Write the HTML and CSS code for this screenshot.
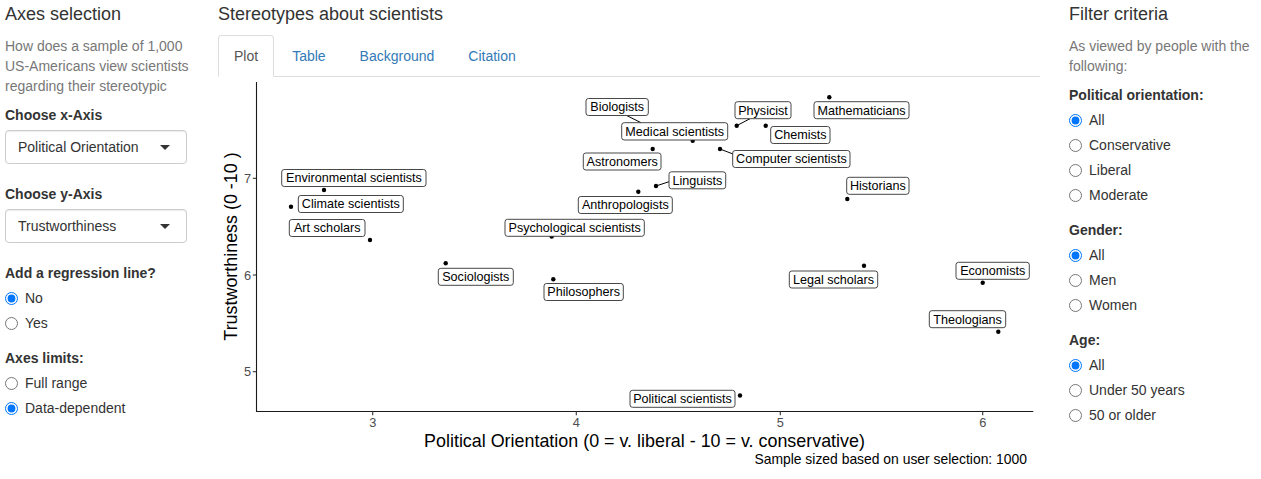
FILE: index.html
```html
<!DOCTYPE html>
<html>
<head>
<meta charset="utf-8">
<title>Stereotypes about scientists</title>
<link rel="stylesheet" href="styles.css">
</head>
<body>
<div class="page">
  <aside class="col left">
    <h3 class="title">Axes selection</h3>
    <p class="muted">How does a sample of 1,000 US-Americans view scientists regarding their stereotypic</p>
    <div class="sel-group">
      <label class="ctl-label sel-label">Choose x-Axis</label>
      <div class="select"><span>Political Orientation</span><span class="caret"></span></div>
    </div>
    <div class="sel-group">
      <label class="ctl-label sel-label">Choose y-Axis</label>
      <div class="select"><span>Trustworthiness</span><span class="caret"></span></div>
    </div>
    <div class="radio-group">
      <label class="ctl-label">Add a regression line?</label>
      <div class="options">
        <label class="radio"><input type="radio" name="reg" checked><span>No</span></label>
        <label class="radio"><input type="radio" name="reg"><span>Yes</span></label>
      </div>
    </div>
    <div class="radio-group">
      <label class="ctl-label">Axes limits:</label>
      <div class="options">
        <label class="radio"><input type="radio" name="lim"><span>Full range</span></label>
        <label class="radio"><input type="radio" name="lim" checked><span>Data-dependent</span></label>
      </div>
    </div>
  </aside>

  <main class="col main">
    <h3 class="title main-title">Stereotypes about scientists</h3>
    <ul class="tabs">
      <li><a class="tab active" href="#plot">Plot</a></li>
      <li><a class="tab" href="#table">Table</a></li>
      <li><a class="tab" href="#background">Background</a></li>
      <li><a class="tab" href="#citation">Citation</a></li>
    </ul>
    <svg class="plot" width="822" height="400" viewBox="218 77 822 400" xmlns="http://www.w3.org/2000/svg">
      <g class="dots">
        <circle cx="829.3" cy="97.3" r="2.2"/>
        <circle cx="736.7" cy="125.7" r="2.2"/>
        <circle cx="765.7" cy="125.7" r="2.2"/>
        <circle cx="692.7" cy="140.8" r="2.2"/>
        <circle cx="652.7" cy="149" r="2.2"/>
        <circle cx="720" cy="149" r="2.2"/>
        <circle cx="656" cy="186" r="2.2"/>
        <circle cx="638.3" cy="191.7" r="2.2"/>
        <circle cx="847.3" cy="199" r="2.2"/>
        <circle cx="324" cy="190" r="2.2"/>
        <circle cx="291" cy="206.7" r="2.2"/>
        <circle cx="370" cy="240" r="2.2"/>
        <circle cx="551.7" cy="236.5" r="2.2"/>
        <circle cx="445.7" cy="263.3" r="2.2"/>
        <circle cx="553.3" cy="279.3" r="2.2"/>
        <circle cx="864" cy="265.7" r="2.2"/>
        <circle cx="982.7" cy="282.7" r="2.2"/>
        <circle cx="998.3" cy="331.7" r="2.2"/>
        <circle cx="740" cy="395.5" r="2.2"/>
      </g>
      <g class="segs">
        <line x1="626.7" y1="115.5" x2="641" y2="122.7"/>
        <line x1="736.7" y1="125.7" x2="750" y2="118.7"/>
        <line x1="720" y1="149" x2="733" y2="154"/>
        <line x1="656" y1="186" x2="669" y2="181.7"/>
      </g>
      <g class="labels">
        <rect x="586" y="98.5" width="62.3" height="17" rx="2.5"/><text x="617.2" y="111.4">Biologists</text>
        <rect x="621.7" y="122.7" width="106" height="17.3" rx="2.5"/><text x="674.7" y="135.7">Medical scientists</text>
        <rect x="735" y="101.7" width="56" height="17" rx="2.5"/><text x="763" y="114.6">Physicist</text>
        <rect x="814" y="101.7" width="95" height="17" rx="2.5"/><text x="861.5" y="114.6">Mathematicians</text>
        <rect x="770.7" y="126.5" width="59.3" height="17" rx="2.5"/><text x="800.4" y="139.4">Chemists</text>
        <rect x="583.3" y="153" width="77.7" height="17" rx="2.5"/><text x="622.2" y="165.9">Astronomers</text>
        <rect x="732.7" y="150.5" width="117.3" height="17" rx="2.5"/><text x="791.4" y="163.4">Computer scientists</text>
        <rect x="669" y="171.8" width="56.7" height="17" rx="2.5"/><text x="697.4" y="184.7">Linguists</text>
        <rect x="578.3" y="196.5" width="94" height="17" rx="2.5"/><text x="625.3" y="209.4">Anthropologists</text>
        <rect x="846.7" y="177.3" width="62.3" height="17" rx="2.5"/><text x="877.9" y="190.2">Historians</text>
        <rect x="281.7" y="169.5" width="144.3" height="17" rx="2.5"/><text x="353.9" y="182.4">Environmental scientists</text>
        <rect x="298.3" y="195.5" width="105" height="17" rx="2.5"/><text x="350.8" y="208.4">Climate scientists</text>
        <rect x="289.3" y="219.5" width="75.7" height="17" rx="2.5"/><text x="327.2" y="232.4">Art scholars</text>
        <rect x="505" y="219.3" width="139.3" height="17" rx="2.5"/><text x="574.7" y="232.2">Psychological scientists</text>
        <rect x="438.3" y="268.3" width="75" height="17" rx="2.5"/><text x="475.8" y="281.2">Sociologists</text>
        <rect x="544" y="283.5" width="79.3" height="17" rx="2.5"/><text x="583.7" y="296.4">Philosophers</text>
        <rect x="789.3" y="271" width="88.4" height="17" rx="2.5"/><text x="833.5" y="283.9">Legal scholars</text>
        <rect x="956" y="262.3" width="73.3" height="17" rx="2.5"/><text x="992.7" y="275.2">Economists</text>
        <rect x="929.3" y="310.7" width="76.4" height="17" rx="2.5"/><text x="967.5" y="323.6">Theologians</text>
        <rect x="630" y="390.3" width="105" height="17" rx="2.5"/><text x="682.5" y="403.2">Political scientists</text>
      </g>
      <g class="axis">
        <line x1="256.5" y1="82" x2="256.5" y2="412"/>
        <line x1="256" y1="411.5" x2="1033.3" y2="411.5"/>
        <line class="tick" x1="252.8" y1="178.3" x2="256.5" y2="178.3"/>
        <line class="tick" x1="252.8" y1="275" x2="256.5" y2="275"/>
        <line class="tick" x1="252.8" y1="371.7" x2="256.5" y2="371.7"/>
        <line class="tick" x1="372.7" y1="411.5" x2="372.7" y2="415.2"/>
        <line class="tick" x1="576.3" y1="411.5" x2="576.3" y2="415.2"/>
        <line class="tick" x1="780.3" y1="411.5" x2="780.3" y2="415.2"/>
        <line class="tick" x1="982.7" y1="411.5" x2="982.7" y2="415.2"/>
      </g>
      <g class="ticklab ylab">
        <text x="251" y="182.9">7</text>
        <text x="251" y="279.6">6</text>
        <text x="251" y="376.3">5</text>
      </g>
      <g class="ticklab xlab">
        <text x="372.7" y="426.8">3</text>
        <text x="576.3" y="426.8">4</text>
        <text x="780.3" y="426.8">5</text>
        <text x="982.7" y="426.8">6</text>
      </g>
      <text class="axtitle" x="644.5" y="446.7">Political Orientation (0 = v. liberal - 10 = v. conservative)</text>
      <text class="axtitle" transform="translate(237 246.5) rotate(-90)" x="0" y="0">Trustworthiness (0 -10 )</text>
      <text class="caption" x="1027" y="464">Sample sized based on user selection: 1000</text>
    </svg>
  </main>

  <aside class="col right">
    <h3 class="title">Filter criteria</h3>
    <p class="muted">As viewed by people with the following:</p>
    <div class="radio-group">
      <label class="ctl-label">Political orientation:</label>
      <div class="options">
        <label class="radio"><input type="radio" name="pol" checked><span>All</span></label>
        <label class="radio"><input type="radio" name="pol"><span>Conservative</span></label>
        <label class="radio"><input type="radio" name="pol"><span>Liberal</span></label>
        <label class="radio"><input type="radio" name="pol"><span>Moderate</span></label>
      </div>
    </div>
    <div class="radio-group">
      <label class="ctl-label">Gender:</label>
      <div class="options">
        <label class="radio"><input type="radio" name="gen" checked><span>All</span></label>
        <label class="radio"><input type="radio" name="gen"><span>Men</span></label>
        <label class="radio"><input type="radio" name="gen"><span>Women</span></label>
      </div>
    </div>
    <div class="radio-group">
      <label class="ctl-label">Age:</label>
      <div class="options">
        <label class="radio"><input type="radio" name="age" checked><span>All</span></label>
        <label class="radio"><input type="radio" name="age"><span>Under 50 years</span></label>
        <label class="radio"><input type="radio" name="age"><span>50 or older</span></label>
      </div>
    </div>
  </aside>
</div>
</body>
</html>
```

FILE: styles.css
```css
html, body {
  margin: 0;
  padding: 0;
  background: #fff;
}
body {
  font-family: "Liberation Sans", Arial, Helvetica, sans-serif;
  font-size: 14px;
  line-height: 20px;
  color: #333;
}
.page {
  display: flex;
  align-items: flex-start;
  padding-left: 5px;
}
.col {
  flex: none;
}
.left {
  width: 200px;
}
.main {
  width: 822px;
  margin-left: 13px;
}
.right {
  width: 187px;
  margin-left: 29px;
}
.title {
  font-size: 18px;
  font-weight: 400;
  line-height: 20px;
  margin: 4px 0 12px;
  color: #333;
}
.main-title {
  margin-bottom: 11px;
}
.muted {
  color: #777;
  margin: 0 0 10px;
}
.left .muted {
  margin-bottom: 9px;
}
.right .muted {
  margin-bottom: 9px;
}
.ctl-label {
  display: block;
  font-weight: 700;
  margin-bottom: 5px;
}
.sel-label {
  margin-bottom: 5px;
}
.sel-group {
  margin-bottom: 20px;
}
.select {
  width: 182px;
  height: 34px;
  box-sizing: border-box;
  border: 1px solid #ccc;
  border-radius: 4px;
  padding: 0 16px 0 12px;
  display: flex;
  align-items: center;
  justify-content: space-between;
  background: #fff;
  box-shadow: inset 0 1px 1px rgba(0, 0, 0, 0.075);
  color: #333;
}
.caret {
  width: 0;
  height: 0;
  border-left: 5px solid transparent;
  border-right: 5px solid transparent;
  border-top: 5px solid #333;
}
.radio-group {
  margin-bottom: 15px;
}
.options {
  display: flex;
  flex-direction: column;
  gap: 5px;
}
.radio {
  display: flex;
  align-items: center;
  gap: 7px;
  height: 20px;
}
.radio input {
  margin: 0;
  width: 13px;
  height: 13px;
  flex: none;
}
.tabs {
  display: flex;
  list-style: none;
  margin: 0;
  padding: 0;
  border-bottom: 1px solid #ddd;
}
.tab {
  display: block;
  padding: 10px 15px;
  border: 1px solid transparent;
  border-radius: 4px 4px 0 0;
  margin-right: 2px;
  margin-bottom: -1px;
  color: #337ab7;
  text-decoration: none;
}
.tab.active {
  color: #555;
  background: #fff;
  border-color: #ddd #ddd transparent;
}
.plot {
  display: block;
  font-family: "Liberation Sans", Arial, Helvetica, sans-serif;
}
.dots circle {
  fill: #000;
}
.segs line {
  stroke: #000;
  stroke-width: 1;
}
.labels rect {
  fill: #fff;
  stroke: #333;
  stroke-width: 0.9;
}
.labels text {
  font-size: 12.6px;
  text-anchor: middle;
  fill: #000;
}
.axis line {
  stroke: #1a1a1a;
  stroke-width: 1.1;
}
.axis .tick {
  stroke: #333;
}
.ticklab text {
  font-size: 12.8px;
  fill: #4d4d4d;
}
.ylab text {
  text-anchor: end;
}
.xlab text {
  text-anchor: middle;
}
.axtitle {
  font-size: 17.9px;
  text-anchor: middle;
  fill: #000;
}
.caption {
  font-size: 13.9px;
  text-anchor: end;
  fill: #000;
}
```
